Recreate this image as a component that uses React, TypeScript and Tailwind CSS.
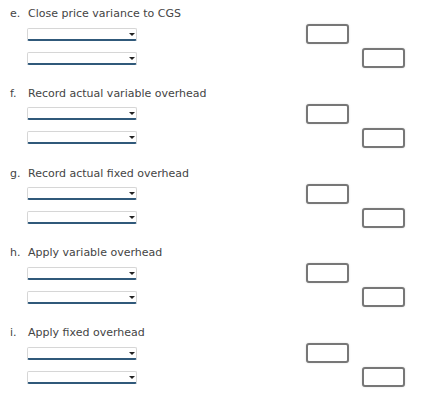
const ENTRIES = [
  { key: "e", label: "Close price variance to CGS" },
  { key: "f", label: "Record actual variable overhead" },
  { key: "g", label: "Record actual fixed overhead" },
  { key: "h", label: "Apply variable overhead" },
  { key: "i", label: "Apply fixed overhead" },
];

function Dropdown() {
  return (
    <div className="relative h-[13px] w-[110px] rounded-[2px] border border-[#d6d6d6] border-b-2 border-b-[#30597a] bg-white">
      <span className="absolute right-[1px] top-[4px] h-0 w-0 border-x-[3px] border-t-[3px] border-x-transparent border-t-[#222]" />
    </div>
  );
}

function AmountBox() {
  return (
    <div className="h-[20px] w-[43px] rounded-[3px] border-2 border-[#777] bg-white shadow-[0_0_2px_rgba(0,0,0,0.15)]" />
  );
}

export default function App() {
  return (
    <div className="h-[401px] w-[434px] bg-white pt-[7px] font-['DejaVu_Sans',Verdana,sans-serif] text-[11px] text-[#444]">
      {ENTRIES.map((entry) => (
        <div key={entry.key} className="h-[79.75px]">
          <div className="flex h-[13px] items-center pl-[10px] leading-[13px]">
            <span className="w-[18px]">{entry.key}.</span>
            <span>{entry.label}</span>
          </div>
          <div className="mt-[4px] grid grid-cols-[110px_169px_43px_13px_43px] items-center pl-[27px]">
            <div className="col-start-1 row-start-1 flex h-[20px] items-center">
              <Dropdown />
            </div>
            <div className="col-start-3 row-start-1">
              <AmountBox />
            </div>
            <div className="col-start-1 row-start-2 mt-[4px] flex h-[20px] items-center">
              <Dropdown />
            </div>
            <div className="col-start-5 row-start-2 mt-[4px]">
              <AmountBox />
            </div>
          </div>
        </div>
      ))}
    </div>
  );
}
